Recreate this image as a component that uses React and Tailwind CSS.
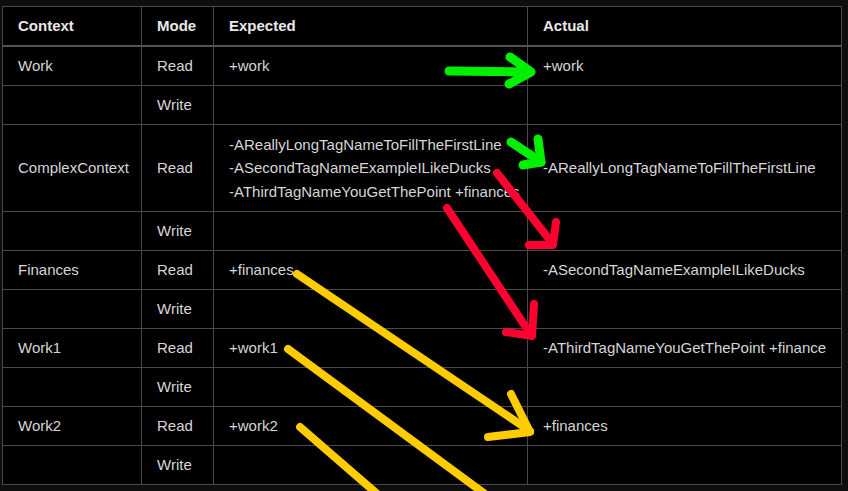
import React from "react";

const rows = [
  { ctx: "Work", mode: "Read", exp: ["+work"], act: "+work" },
  { ctx: "", mode: "Write", exp: [], act: "" },
  {
    ctx: "ComplexContext",
    mode: "Read",
    exp: [
      "-AReallyLongTagNameToFillTheFirstLine",
      "-ASecondTagNameExampleILikeDucks",
      "-AThirdTagNameYouGetThePoint +finances",
    ],
    act: "-AReallyLongTagNameToFillTheFirstLine",
    tall: true,
  },
  { ctx: "", mode: "Write", exp: [], act: "" },
  { ctx: "Finances", mode: "Read", exp: ["+finances"], act: "-ASecondTagNameExampleILikeDucks" },
  { ctx: "", mode: "Write", exp: [], act: "" },
  { ctx: "Work1", mode: "Read", exp: ["+work1"], act: "-AThirdTagNameYouGetThePoint +finance" },
  { ctx: "", mode: "Write", exp: [], act: "" },
  { ctx: "Work2", mode: "Read", exp: ["+work2"], act: "+finances" },
  { ctx: "", mode: "Write", exp: [], act: "" },
];

function Cell({ children, last, bottom, h }) {
  return (
    <div
      className={
        "flex flex-col justify-center pl-[15px] pr-2 whitespace-nowrap overflow-hidden text-[#d6d6d6] " +
        h +
        (last ? "" : " border-r border-[#4a4a4a]") +
        (bottom ? " border-b border-[#4a4a4a]" : "")
      }
    >
      {children}
    </div>
  );
}

export default function App() {
  return (
    <div
      className="relative w-[848px] h-[491px] overflow-hidden bg-[#0e0e0e] pt-[6px] pl-[2px]"
      style={{ fontFamily: '"Liberation Sans", Arial, sans-serif' }}
    >
      <div className="w-[840px] border border-[#4a4a4a] bg-black text-[15px] leading-[23.5px]">
        <div className="grid grid-cols-[139px_72px_314px_313px]">
          {["Context", "Mode", "Expected", "Actual"].map((t, i) => (
            <div
              key={t}
              className={
                "h-[40px] flex items-center pl-[15px] font-bold text-[#e8e8e8] border-b-2 border-b-[#555555]" +
                (i < 3 ? " border-r border-r-[#4a4a4a]" : "")
              }
            >
              {t}
            </div>
          ))}
          {rows.map((r, ri) => {
            const lastRow = ri === rows.length - 1;
            const h = lastRow ? "h-[38px]" : r.tall ? "h-[87px]" : "h-[39px]";
            return (
              <React.Fragment key={ri}>
                <Cell h={h} bottom={!lastRow}>{r.ctx}</Cell>
                <Cell h={h} bottom={!lastRow}>{r.mode}</Cell>
                <Cell h={h} bottom={!lastRow}>
                  {r.exp.map((e) => (
                    <div key={e}>{e}</div>
                  ))}
                </Cell>
                <Cell h={h} bottom={!lastRow} last>
                  {r.act}
                </Cell>
              </React.Fragment>
            );
          })}
        </div>
      </div>

      <svg
        className="absolute left-0 top-0 pointer-events-none"
        width="848"
        height="491"
        viewBox="0 0 848 491"
        fill="none"
        strokeLinecap="round"
        strokeLinejoin="round"
      >
        <g stroke="#00f000" strokeWidth="9">
          <path d="M449 71 L530 72" />
          <path d="M510 57 L531 72 L509 84" />
          <path d="M511 142 L541 162" />
          <path d="M538 139 L541 162 L523 165" />
        </g>
        <g stroke="#ff0030" strokeWidth="8">
          <path d="M497 173 L553 244" />
          <path d="M556 222 L553 245 L529 245" />
          <path d="M447 208 L531 335" />
          <path d="M534 304 L532 336 L506 332" />
        </g>
        <g stroke="#ffcc00" strokeWidth="8">
          <path d="M297 274 L530 431" />
          <path d="M511 394 L530 432 L488 437" />
          <path d="M288 349 L500 505" />
          <path d="M300 427 L390 505" />
        </g>
      </svg>
    </div>
  );
}
